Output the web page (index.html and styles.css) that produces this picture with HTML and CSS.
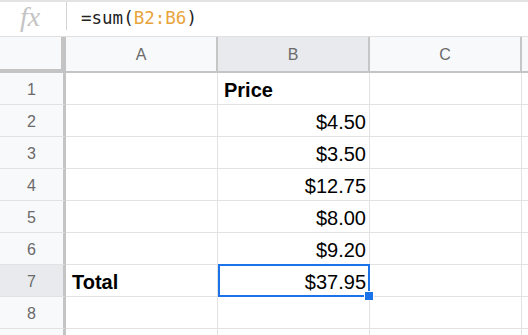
FILE: index.html
```html
<!DOCTYPE html>
<html lang="en">
<head>
    <meta charset="UTF-8">
    <title>Sheet</title>
    <link rel="stylesheet" href="styles.css">
</head>
<body>
    <div class="formula-bar">
        <div class="fx">fx</div>
        <div class="fx-sep"></div>
        <div class="formula">=sum(<span class="ref">B2:B6</span>)</div>
    </div>

    <div class="sheet">
        <div class="corner"></div>
        <div class="col-head">A</div>
        <div class="col-head active">B</div>
        <div class="col-head">C</div>
        <div class="col-head"></div>

        <div class="row-head">1</div>
        <div class="cell"></div>
        <div class="cell bold">Price</div>
        <div class="cell"></div>
        <div class="cell"></div>

        <div class="row-head">2</div>
        <div class="cell"></div>
        <div class="cell num">$4.50</div>
        <div class="cell"></div>
        <div class="cell"></div>

        <div class="row-head">3</div>
        <div class="cell"></div>
        <div class="cell num">$3.50</div>
        <div class="cell"></div>
        <div class="cell"></div>

        <div class="row-head">4</div>
        <div class="cell"></div>
        <div class="cell num">$12.75</div>
        <div class="cell"></div>
        <div class="cell"></div>

        <div class="row-head">5</div>
        <div class="cell"></div>
        <div class="cell num">$8.00</div>
        <div class="cell"></div>
        <div class="cell"></div>

        <div class="row-head">6</div>
        <div class="cell"></div>
        <div class="cell num">$9.20</div>
        <div class="cell"></div>
        <div class="cell"></div>

        <div class="row-head active">7</div>
        <div class="cell bold">Total</div>
        <div class="cell num selected">$37.95<span class="handle"></span></div>
        <div class="cell"></div>
        <div class="cell"></div>

        <div class="row-head">8</div>
        <div class="cell"></div>
        <div class="cell"></div>
        <div class="cell"></div>
        <div class="cell"></div>

        <div class="row-head"></div>
        <div class="cell"></div>
        <div class="cell"></div>
        <div class="cell"></div>
        <div class="cell"></div>
    </div>
</body>
</html>
```

FILE: styles.css
```css
body {
    margin: 0;
    font-family: "Liberation Sans", Arial, sans-serif;
    background-color: #fff;
    border-top: 2px solid #e3e3e3;
    overflow: hidden;
}

.formula-bar {
    display: flex;
    align-items: center;
    height: 34px;
    border-bottom: 1px solid #e0e0e0;
}

.fx {
    width: 66px;
    padding-left: 20px;
    box-sizing: border-box;
    font-family: "Liberation Serif", serif;
    font-style: italic;
    font-size: 28px;
    color: #c4c4c4;
    margin-top: -4px;
}

.fx-sep {
    width: 1px;
    height: 28px;
    margin-top: -6px;
    background-color: #d4d4d4;
}

.formula {
    margin-left: 14px;
    font-family: "DejaVu Sans Mono", monospace;
    font-size: 17.5px;
    color: #222;
    margin-top: -2px;
}

.formula .ref {
    color: #e8a43c;
}

.sheet {
    display: grid;
    grid-template-columns: 66px 152px 152px 152px 1fr;
    grid-template-rows: 36px repeat(9, 32px);
}

.corner {
    background-color: #f8f9fa;
    border-right: 5px solid #c4c4c4;
    border-bottom: 4px solid #c4c4c4;
    box-sizing: border-box;
}

.col-head {
    display: flex;
    align-items: center;
    justify-content: center;
    padding-top: 2px;
    background-color: #f8f9fa;
    border-right: 2px solid #c6c6c6;
    border-bottom: 2px solid #c4c4c4;
    box-sizing: border-box;
    font-size: 16px;
    color: #6a6a6a;
}

.col-head.active {
    background-color: #e8eaed;
}

.row-head {
    display: flex;
    align-items: center;
    justify-content: center;
    padding-top: 2px;
    background-color: #f8f9fa;
    border-right: 3px solid #c4c4c4;
    border-bottom: 1px solid #e2e2e2;
    box-sizing: border-box;
    font-size: 16px;
    color: #6a6a6a;
}

.row-head.active {
    background-color: #e8eaed;
}

.cell {
    position: relative;
    display: flex;
    align-items: flex-end;
    padding: 0 3px 2px 6px;
    border-right: 1px solid #e2e2e2;
    border-bottom: 1px solid #e2e2e2;
    box-sizing: border-box;
    font-size: 20px;
    color: #000;
}

.cell.bold {
    font-weight: bold;
}

.cell.num {
    justify-content: flex-end;
}

.selected::after {
    content: "";
    position: absolute;
    left: 0;
    top: -1px;
    right: -1px;
    bottom: -1px;
    border: 2px solid #1a73e8;
}

.handle {
    position: absolute;
    right: -5px;
    bottom: -5px;
    width: 8px;
    height: 8px;
    background-color: #1a73e8;
    border: 1px solid #fff;
    z-index: 1;
}
```
